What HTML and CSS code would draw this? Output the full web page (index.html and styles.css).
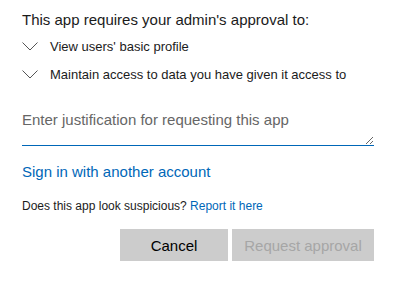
FILE: index.html
```html
<!DOCTYPE html>
<html>
<head>
	<meta charset="utf-8">
	<title>Approval required</title>
	<link rel="stylesheet" href="styles.css">
</head>
<body>
	<div class="panel">
		<div class="title">This app requires your admin's approval to:</div>
		<ul class="perms">
			<li>
				<svg class="chev" width="16" height="9" viewBox="0 0 16 9"><path d="M0.5 0.5 L8 8 L15.5 0.5" fill="none" stroke="#555" stroke-width="1"/></svg>
				<span>View users' basic profile</span>
			</li>
			<li>
				<svg class="chev" width="16" height="9" viewBox="0 0 16 9"><path d="M0.5 0.5 L8 8 L15.5 0.5" fill="none" stroke="#555" stroke-width="1"/></svg>
				<span>Maintain access to data you have given it access to</span>
			</li>
		</ul>
		<textarea class="reason" placeholder="Enter justification for requesting this app"></textarea>
		<a class="other" href="#">Sign in with another account</a>
		<p class="report">Does this app look suspicious? <a href="#">Report it here</a></p>
		<div class="actions">
			<button type="button" class="btn">Cancel</button>
			<button type="button" class="btn btn-off" disabled>Request approval</button>
		</div>
	</div>
</body>
</html>
```
FILE: styles.css
```css
body
{
	margin: 0;
	background: #fff;
	font-family: "Liberation Sans", Arial, sans-serif;
	color: #1b1b1b;
}
.panel
{
	width: 352px;
	padding: 10px 22px 0;
}
.title
{
	font-size: 15px;
	line-height: 20px;
}
.perms
{
	list-style: none;
	margin: 2px 0 0;
	padding: 0;
}
.perms li
{
	display: flex;
	align-items: center;
	height: 28px;
	font-size: 13px;
}
.chev
{
	margin-right: 12px;
	flex-shrink: 0;
}
.reason
{
	display: block;
	box-sizing: border-box;
	width: 352px;
	height: 36px;
	margin-top: 22px;
	padding: 0 0 6px;
	border: none;
	border-bottom: 1px solid #0067b8;
	font-family: inherit;
	font-size: 15px;
	line-height: 20px;
	color: #1b1b1b;
	outline: none;
}
.reason::placeholder
{
	color: #666;
}
.other
{
	display: block;
	margin-top: 16px;
	font-size: 15px;
	line-height: 20px;
	color: #0067b8;
	text-decoration: none;
}
.report
{
	margin: 16px 0 0;
	font-size: 12px;
	line-height: 16px;
}
.report a
{
	color: #0067b8;
	text-decoration: none;
}
.actions
{
	display: flex;
	justify-content: flex-end;
	gap: 4px;
	margin-top: 15px;
}
.btn
{
	height: 32px;
	width: 108px;
	border: none;
	background: #cccccc;
	font-family: inherit;
	font-size: 15px;
	color: #000;
	padding: 0;
}
.btn-off
{
	width: 142px;
	color: #a6a6a6;
}
```
